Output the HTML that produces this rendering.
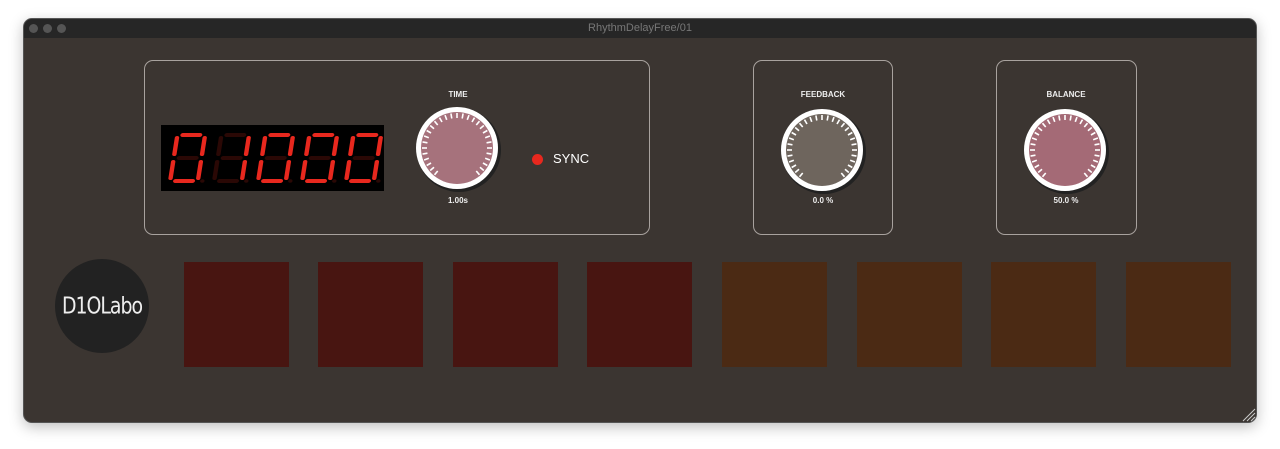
<!DOCTYPE html>
<html><head><meta charset="utf-8"><style>
*{margin:0;padding:0;box-sizing:border-box}
body{width:1280px;height:449px;background:#fff;position:relative;overflow:hidden;font-family:"Liberation Sans",sans-serif}
.win{position:absolute;left:23px;top:18px;width:1234px;height:405px;background:#3b3531;border-radius:9px;box-shadow:0 4px 14px rgba(0,0,0,.25);overflow:hidden;border:1px solid #555}
.tb{height:19px;background:#262626;color:#777;font-size:11px;text-align:center;line-height:19px}
.dot{position:absolute;top:5px;width:9px;height:9px;border-radius:50%;background:#555}
.panel{position:absolute;border:1px solid #a8a29e;border-radius:9px}
.lab{position:absolute;color:#eee;font-size:8px;font-weight:bold;text-align:center;width:120px}
.sq{position:absolute;top:243px;width:105px;height:105px}
</style></head><body>
<div class="win">
<div class="tb">RhythmDelayFree/01</div>
<div class="dot" style="left:5px"></div><div class="dot" style="left:19px"></div><div class="dot" style="left:33px"></div>
<div class="panel" style="left:120px;top:41px;width:506px;height:175px"></div>
<div class="panel" style="left:729px;top:41px;width:140px;height:175px"></div>
<div class="panel" style="left:972px;top:41px;width:141px;height:175px"></div>
<div class="lab" style="left:374px;top:71px">TIME</div>
<div class="lab" style="left:374px;top:177px">1.00s</div>
<div class="lab" style="left:739px;top:71px">FEEDBACK</div>
<div class="lab" style="left:739px;top:177px">0.0 %</div>
<div class="lab" style="left:982px;top:71px">BALANCE</div>
<div class="lab" style="left:982px;top:177px">50.0 %</div>
<div style="position:absolute;left:508px;top:135px;width:11px;height:11px;border-radius:50%;background:#e8281e"></div>
<div style="position:absolute;left:529px;top:132px;color:#fff;font-size:13px">SYNC</div>
<div style="position:absolute;left:31px;top:240px;width:94px;height:94px;border-radius:50%;background:#222;color:#eee;font-size:21px;line-height:94px;text-align:center;font-family:'DejaVu Sans Condensed','Liberation Sans Narrow',sans-serif;font-weight:200;letter-spacing:-1px"><span style="display:inline-block;transform:scaleY(1.1)">D1OLabo</span></div>
<div class="sq" style="left:160px;background:#481511"></div>
<div class="sq" style="left:294px;background:#481511"></div>
<div class="sq" style="left:429px;background:#481511"></div>
<div class="sq" style="left:563px;background:#481511"></div>
<div class="sq" style="left:698px;background:#4b2a14"></div>
<div class="sq" style="left:833px;background:#4b2a14"></div>
<div class="sq" style="left:967px;background:#4b2a14"></div>
<div class="sq" style="left:1102px;background:#4b2a14"></div>
</div>
<svg width="1280" height="449" style="position:absolute;left:0;top:0">
<defs>
<g id="ticks"><g stroke="#fff" stroke-width="1.6">
<line x1="0" y1="-30" x2="0" y2="-35" transform="rotate(-140)"/><line x1="0" y1="-30" x2="0" y2="-35" transform="rotate(-130)"/><line x1="0" y1="-30" x2="0" y2="-35" transform="rotate(-120)"/><line x1="0" y1="-30" x2="0" y2="-35" transform="rotate(-110)"/><line x1="0" y1="-30" x2="0" y2="-35" transform="rotate(-100)"/><line x1="0" y1="-30" x2="0" y2="-35" transform="rotate(-90)"/><line x1="0" y1="-30" x2="0" y2="-35" transform="rotate(-80)"/><line x1="0" y1="-30" x2="0" y2="-35" transform="rotate(-70)"/><line x1="0" y1="-30" x2="0" y2="-35" transform="rotate(-60)"/><line x1="0" y1="-30" x2="0" y2="-35" transform="rotate(-50)"/><line x1="0" y1="-30" x2="0" y2="-35" transform="rotate(-40)"/><line x1="0" y1="-30" x2="0" y2="-35" transform="rotate(-30)"/><line x1="0" y1="-30" x2="0" y2="-35" transform="rotate(-20)"/><line x1="0" y1="-30" x2="0" y2="-35" transform="rotate(-10)"/><line x1="0" y1="-30" x2="0" y2="-35"/><line x1="0" y1="-30" x2="0" y2="-35" transform="rotate(10)"/><line x1="0" y1="-30" x2="0" y2="-35" transform="rotate(20)"/><line x1="0" y1="-30" x2="0" y2="-35" transform="rotate(30)"/><line x1="0" y1="-30" x2="0" y2="-35" transform="rotate(40)"/><line x1="0" y1="-30" x2="0" y2="-35" transform="rotate(50)"/><line x1="0" y1="-30" x2="0" y2="-35" transform="rotate(60)"/><line x1="0" y1="-30" x2="0" y2="-35" transform="rotate(70)"/><line x1="0" y1="-30" x2="0" y2="-35" transform="rotate(80)"/><line x1="0" y1="-30" x2="0" y2="-35" transform="rotate(90)"/><line x1="0" y1="-30" x2="0" y2="-35" transform="rotate(100)"/><line x1="0" y1="-30" x2="0" y2="-35" transform="rotate(110)"/><line x1="0" y1="-30" x2="0" y2="-35" transform="rotate(120)"/><line x1="0" y1="-30" x2="0" y2="-35" transform="rotate(130)"/><line x1="0" y1="-30" x2="0" y2="-35" transform="rotate(140)"/>
</g></g>
</defs>
<g transform="translate(457,148)"><circle r="42" fill="#222" cx="2" cy="2"/><circle r="41" fill="#fff"/><circle r="36" fill="#a6727c"/><use href="#ticks"/></g>
<g transform="translate(822,150)"><circle r="42" fill="#222" cx="2" cy="2"/><circle r="41" fill="#fff"/><circle r="36" fill="#6e655d"/><use href="#ticks"/></g>
<g transform="translate(1065,150)"><circle r="42" fill="#222" cx="2" cy="2"/><circle r="41" fill="#fff"/><circle r="36" fill="#a46a76"/><use href="#ticks"/></g>
<rect x="161" y="125" width="223" height="66" fill="#000"/>
<g id="d0" transform="translate(177,133) skewX(-9) scale(1.22,1)">
<rect x="3" y="0" width="18" height="4" rx="2" fill="#e8281e"/><rect x="21.5" y="3" width="3.6" height="20" rx="1.8" fill="#e8281e"/><rect x="21.5" y="27" width="3.6" height="20" rx="1.8" fill="#e8281e"/><rect x="3" y="46" width="18" height="4" rx="2" fill="#e8281e"/><rect x="-1.2" y="27" width="3.6" height="20" rx="1.8" fill="#e8281e"/><rect x="-1.2" y="3" width="3.6" height="20" rx="1.8" fill="#e8281e"/><rect x="3" y="23" width="18" height="4" rx="2" fill="#2a0805"/><circle cx="27" cy="48" r="1.8" fill="#2a0805"/>
</g>
<g transform="translate(221,133) skewX(-9) scale(1.22,1)">
<rect x="3" y="0" width="18" height="4" rx="2" fill="#2a0805"/><rect x="21.5" y="3" width="3.6" height="20" rx="1.8" fill="#e8281e"/><rect x="21.5" y="27" width="3.6" height="20" rx="1.8" fill="#e8281e"/><rect x="3" y="46" width="18" height="4" rx="2" fill="#2a0805"/><rect x="-1.2" y="27" width="3.6" height="20" rx="1.8" fill="#2a0805"/><rect x="-1.2" y="3" width="3.6" height="20" rx="1.8" fill="#2a0805"/><rect x="3" y="23" width="18" height="4" rx="2" fill="#2a0805"/><circle cx="27" cy="48" r="1.8" fill="#2a0805"/>
</g>
<use href="#d0" transform="translate(88,0)"/>
<use href="#d0" transform="translate(132,0)"/>
<use href="#d0" transform="translate(176,0)"/>
<g stroke="#ccc" stroke-width="1"><line x1="1243" y1="421" x2="1255" y2="409"/><line x1="1247" y1="421" x2="1255" y2="413"/><line x1="1251" y1="421" x2="1255" y2="417"/></g>
</svg>
</body></html>
